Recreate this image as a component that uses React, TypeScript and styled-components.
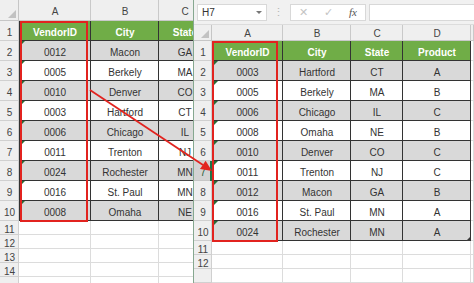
import React from 'react';
import styled, { createGlobalStyle, css } from 'styled-components';

const GlobalStyle = createGlobalStyle`
  html, body {
    margin: 0;
    padding: 0;
    background: #ffffff;
  }
  body {
    font-family: 'Liberation Sans', Arial, sans-serif;
  }
`;

type Kind = 'head' | 'gray' | 'white' | 'empty';

const Page = styled.div`
  position: relative;
  width: 474px;
  height: 283px;
  overflow: hidden;
  background: #ffffff;
`;

const Sheet = styled.div<{ $cols: string; $rows: string }>`
  position: relative;
  display: grid;
  grid-template-columns: ${(p) => p.$cols};
  grid-template-rows: ${(p) => p.$rows};
  font-size: 10px;
  color: #333333;
`;

const headerBase = css`
  display: flex;
  align-items: center;
  justify-content: center;
  background: #efefef;
  color: #444444;
  font-size: 10px;
`;

const Corner = styled.div`
  ${headerBase};
  position: relative;
  box-shadow: inset -1px -1px 0 #c6c6c6;

  &::after {
    content: '';
    position: absolute;
    right: 3px;
    bottom: 3px;
    border-style: solid;
    border-width: 0 0 8px 8px;
    border-color: transparent transparent #c2c2c2 transparent;
  }
`;

const ColHead = styled.div`
  ${headerBase};
  padding-top: 1px;
  box-shadow: inset -1px -1px 0 #c9c9c9;
`;

const RowHead = styled.div<{ $active?: boolean }>`
  ${headerBase};
  padding-top: 2px;
  box-shadow: inset -1px -1px 0 #d0d0d0;

  ${(p) =>
    p.$active &&
    css`
      background: #d3d3d3;
      color: #1f5f3a;
      box-shadow: inset -2px 0 0 #217346, inset 0 -1px 0 #c6c6c6;
    `}
`;

const Cell = styled.div<{ $kind: Kind; $flag?: boolean; $edge?: boolean }>`
  position: relative;
  display: flex;
  align-items: center;
  justify-content: center;
  padding-top: 3px;
  white-space: nowrap;
  overflow: hidden;
  background: ${(p) =>
    p.$kind === 'head' ? '#70ad47' : p.$kind === 'gray' ? '#d9d9d9' : '#ffffff'};
  color: ${(p) => (p.$kind === 'head' ? '#ffffff' : '#333333')};
  font-weight: ${(p) => (p.$kind === 'head' ? 700 : 400)};
  box-shadow: ${(p) =>
    p.$kind === 'empty'
      ? 'inset -1px -1px 0 #dcdcdc'
      : p.$edge
      ? 'inset -1px -1px 0 #333333, inset 1px 0 0 #333333'
      : 'inset -1px -1px 0 #333333'};

  ${(p) =>
    p.$flag &&
    css`
      &::before {
        content: '';
        position: absolute;
        left: 1px;
        top: 0;
        border-style: solid;
        border-width: 5px 5px 0 0;
        border-color: #2b6a36 transparent transparent transparent;
      }
    `}
`;

/* red selection frame drawn over column A */
const Marker = styled.div<{ $left: number; $top: number; $width: number }>`
  position: absolute;
  left: ${(p) => p.$left}px;
  top: ${(p) => p.$top}px;
  width: ${(p) => p.$width}px;
  height: 201px;
  box-sizing: border-box;
  border: 2px solid #e2231f;
  z-index: 2;
  pointer-events: none;
`;

const Handle = styled.div`
  position: absolute;
  left: 272px;
  top: 212px;
  border-style: solid;
  border-width: 0 0 4px 4px;
  border-color: transparent transparent #3a3a3a transparent;
  z-index: 2;
`;

const Window = styled.div`
  position: absolute;
  top: 0;
  left: 193px;
  right: 0;
  bottom: 0;
  display: flex;
  flex-direction: column;
  background: #ffffff;
  border-left: 1px solid #86a890;
`;

const FormulaBar = styled.div`
  display: flex;
  align-items: center;
  height: 31px;
  padding-left: 3px;
  background: #f1f1f1;
  border-bottom: 1px solid #dcdcdc;
  box-sizing: border-box;
`;

const NameBox = styled.div`
  display: flex;
  align-items: center;
  justify-content: space-between;
  width: 70px;
  height: 17px;
  padding: 0 4px;
  box-sizing: border-box;
  background: #ffffff;
  border: 1px solid #d8d8d8;
  font-size: 10px;
  color: #333333;
`;

const Caret = styled.span`
  width: 0;
  height: 0;
  border-style: solid;
  border-width: 3px 3px 0 3px;
  border-color: #777777 transparent transparent transparent;
`;

const Dots = styled.span`
  width: 23px;
  text-align: center;
  color: #b5b5b5;
  font-size: 11px;
`;

const ButtonGroup = styled.div`
  display: flex;
  align-items: center;
  justify-content: space-around;
  width: 76px;
  height: 17px;
  box-sizing: border-box;
  background: #ffffff;
  border: 1px solid #d8d8d8;
`;

const Glyph = styled.span<{ $dim?: boolean }>`
  font-size: 11px;
  color: ${(p) => (p.$dim ? '#c4c4c4' : '#666666')};
`;

const Fx = styled.span`
  font-family: 'Liberation Serif', 'Times New Roman', serif;
  font-style: italic;
  font-size: 11px;
  color: #555555;
`;

const Input = styled.div`
  flex: 1;
  height: 17px;
  margin-left: 3px;
  background: #ffffff;
  border: 1px solid #d8d8d8;
  border-right: none;
  box-sizing: border-box;
`;

const Arrow = styled.svg`
  position: absolute;
  inset: 0;
  z-index: 5;
  pointer-events: none;
`;

const leftRows = [
  ['0012', 'Macon', 'GA'],
  ['0005', 'Berkely', 'MA'],
  ['0010', 'Denver', 'CO'],
  ['0003', 'Hartford', 'CT'],
  ['0006', 'Chicago', 'IL'],
  ['0011', 'Trenton', 'NJ'],
  ['0024', 'Rochester', 'MN'],
  ['0016', 'St. Paul', 'MN'],
  ['0008', 'Omaha', 'NE'],
];

const rightRows = [
  ['0003', 'Hartford', 'CT', 'A'],
  ['0005', 'Berkely', 'MA', 'B'],
  ['0006', 'Chicago', 'IL', 'C'],
  ['0008', 'Omaha', 'NE', 'B'],
  ['0010', 'Denver', 'CO', 'C'],
  ['0011', 'Trenton', 'NJ', 'C'],
  ['0012', 'Macon', 'GA', 'B'],
  ['0016', 'St. Paul', 'MN', 'A'],
  ['0024', 'Rochester', 'MN', 'A'],
];

const LeftSheet = () => {
  const letters = ['A', 'B', 'C', ''];
  return (
    <Sheet $cols="19px 72px 68px 52px 1fr" $rows="21px repeat(10, 20px) repeat(5, 14px)">
      <Corner />
      {letters.map((l, i) => (
        <ColHead key={i}>{l}</ColHead>
      ))}

      <RowHead>1</RowHead>
      <Cell $kind="head" $edge>VendorID</Cell>
      <Cell $kind="head">City</Cell>
      <Cell $kind="head">State</Cell>
      <Cell $kind="empty" />

      {leftRows.map((row, r) => {
        const kind: Kind = r % 2 === 0 ? 'gray' : 'white';
        return (
          <React.Fragment key={r}>
            <RowHead>{r + 2}</RowHead>
            <Cell $kind={kind} $flag $edge>{row[0]}</Cell>
            <Cell $kind={kind}>{row[1]}</Cell>
            <Cell $kind={kind}>{row[2]}</Cell>
            <Cell $kind="empty" />
          </React.Fragment>
        );
      })}

      {['11', '12', '13', '14', ''].map((n, i) => (
        <React.Fragment key={i}>
          <RowHead>{n}</RowHead>
          <Cell $kind="empty" />
          <Cell $kind="empty" />
          <Cell $kind="empty" />
          <Cell $kind="empty" />
        </React.Fragment>
      ))}

      <Marker $left={20} $top={21} $width={68} />
    </Sheet>
  );
};

const RightSheet = () => {
  const letters = ['A', 'B', 'C', 'D', ''];
  return (
    <Sheet $cols="18px 71px 68px 52px 68px 1fr" $rows="16px repeat(10, 20px) repeat(3, 14px)">
      <Corner />
      {letters.map((l, i) => (
        <ColHead key={i}>{l}</ColHead>
      ))}

      <RowHead>1</RowHead>
      <Cell $kind="head" $edge>VendorID</Cell>
      <Cell $kind="head">City</Cell>
      <Cell $kind="head">State</Cell>
      <Cell $kind="head">Product</Cell>
      <Cell $kind="empty" />

      {rightRows.map((row, r) => {
        const kind: Kind = r % 2 === 0 ? 'gray' : 'white';
        return (
          <React.Fragment key={r}>
            <RowHead $active={r + 2 === 7}>{r + 2}</RowHead>
            <Cell $kind={kind} $flag $edge>{row[0]}</Cell>
            <Cell $kind={kind}>{row[1]}</Cell>
            <Cell $kind={kind}>{row[2]}</Cell>
            <Cell $kind={kind}>{row[3]}</Cell>
            <Cell $kind="empty" />
          </React.Fragment>
        );
      })}

      {['11', '12', ''].map((n, i) => (
        <React.Fragment key={i}>
          <RowHead>{n}</RowHead>
          <Cell $kind="empty" />
          <Cell $kind="empty" />
          <Cell $kind="empty" />
          <Cell $kind="empty" />
          <Cell $kind="empty" />
        </React.Fragment>
      ))}

      <Marker $left={18} $top={16} $width={66} />
      <Handle />
    </Sheet>
  );
};

export default function App() {
  return (
    <Page>
      <GlobalStyle />
      <LeftSheet />

      <Window>
        <FormulaBar>
          <NameBox>
            H7
            <Caret />
          </NameBox>
          <Dots>⋮</Dots>
          <ButtonGroup>
            <Glyph $dim>✕</Glyph>
            <Glyph $dim>✓</Glyph>
            <Fx>fx</Fx>
          </ButtonGroup>
          <Input />
        </FormulaBar>
        <RightSheet />
      </Window>

      <Arrow width="474" height="283" viewBox="0 0 474 283">
        <line x1="90" y1="90" x2="203" y2="165" stroke="#e2231f" strokeWidth="1.8" />
        <polygon points="212,171 205.6,160.7 200,169.1" fill="#e2231f" />
      </Arrow>
    </Page>
  );
}
